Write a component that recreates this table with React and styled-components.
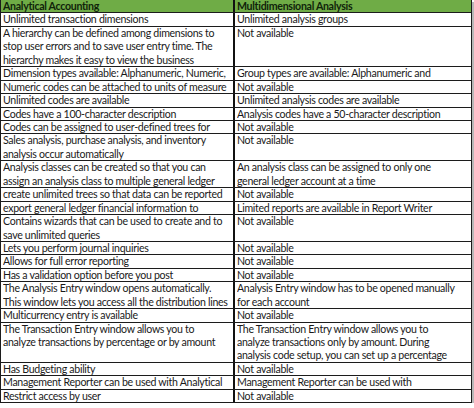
import React from 'react'
import styled, { createGlobalStyle } from 'styled-components'

const rows = [
   { lines: 1, left: ['Unlimited transaction dimensions'], right: ['Unlimited analysis groups'] },
   {
      lines: 3,
      left: ['A hierarchy can be defined among dimensions to', 'stop user errors and to save user entry time. The', 'hierarchy makes it easy to view the business'],
      right: ['Not available']
   },
   { lines: 1, left: ['Dimension types available: Alphanumeric, Numeric,'], right: ['Group types are available: Alphanumeric and'] },
   { lines: 1, left: ['Numeric codes can be attached to units of measure'], right: ['Not available'] },
   { lines: 1, left: ['Unlimited codes are available'], right: ['Unlimited analysis codes are available'] },
   { lines: 1, left: ['Codes have a 100-character description'], right: ['Analysis codes have a 50-character description'] },
   { lines: 1, left: ['Codes can be assigned to user-defined trees for'], right: ['Not available'] },
   { lines: 2, left: ['Sales analysis, purchase analysis, and inventory', 'analysis occur automatically'], right: ['Not available'] },
   {
      lines: 2,
      left: ['Analysis classes can be created so that you can', 'assign an analysis class to multiple general ledger'],
      right: ['An analysis class can be assigned to only one', 'general ledger account at a time']
   },
   { lines: 1, left: ['create unlimited trees so that data can be reported'], right: ['Not available'] },
   { lines: 1, left: ['export general ledger financial information to'], right: ['Limited reports are available in Report Writer'] },
   { lines: 2, left: ['Contains wizards that can be used to create and to', 'save unlimited queries'], right: ['Not available'] },
   { lines: 1, left: ['Lets you perform journal inquiries'], right: ['Not available'] },
   { lines: 1, left: ['Allows for full error reporting'], right: ['Not available'] },
   { lines: 1, left: ['Has a validation option before you post'], right: ['Not available'] },
   {
      lines: 2,
      left: ['The Analysis Entry window opens automatically.', 'This window lets you access all the distribution lines'],
      right: ['Analysis Entry window has to be opened manually', 'for each account']
   },
   { lines: 1, left: ['Multicurrency entry is available'], right: ['Not available'] },
   {
      lines: 3,
      left: ['The Transaction Entry window allows you to', 'analyze transactions by percentage or by amount'],
      right: ['The Transaction Entry window allows you to', 'analyze transactions only by amount. During', 'analysis code setup, you can set up a percentage']
   },
   { lines: 1, left: ['Has Budgeting ability'], right: ['Not available'] },
   { lines: 1, left: ['Management Reporter can be used with Analytical'], right: ['Management Reporter can be used with'] },
   { lines: 1, left: ['Restrict access by user'], right: ['Not available'] }
]

const LINE = 13.45

const Global = createGlobalStyle`
   body {
      margin: 0;
      background: #fff;
   }
`

const Sheet = styled.div`
   width: 472px;
   display: flex;
   flex-direction: column;
   border-left: 1px solid #1c1c1c;
   border-right: 1px solid #1c1c1c;
   box-sizing: border-box;
   box-shadow: 2px 2px 0 #b8b8b8;
   font-family: Lato, 'Open Sans', sans-serif;
   font-size: 10.6px;
   color: #1a1a1a;
`

const Row = styled.div`
   display: grid;
   grid-template-columns: 232px 1fr;
   height: ${p => p.$lines * LINE}px;
   box-sizing: border-box;
   border-bottom: 1px solid #1c1c1c;
   background: ${p => (p.$head ? '#6fac46' : '#fff')};
   font-weight: ${p => (p.$head ? 700 : 400)};
   color: ${p => (p.$head ? '#10240a' : 'inherit')};
`

const Cell = styled.div`
   overflow: hidden;
   padding: 0 1px 0 2px;
   box-sizing: border-box;
   & + & {
      border-left: 2px solid #111;
   }
`

const Line = styled.div`
   height: ${LINE}px;
   line-height: ${LINE}px;
   white-space: nowrap;
   overflow: hidden;
   letter-spacing: -0.3px;
`

const Texts = ({ lines }) => lines.map((t, i) => <Line key={i}>{t}</Line>)

export default function App() {
   return (
      <>
         <Global />
         <Sheet>
            <Row $lines={1} $head>
               <Cell>
                  <Line>Analytical Accounting</Line>
               </Cell>
               <Cell>
                  <Line>Multidimensional Analysis</Line>
               </Cell>
            </Row>
            {rows.map((r, i) => (
               <Row key={i} $lines={r.lines}>
                  <Cell>
                     <Texts lines={r.left} />
                  </Cell>
                  <Cell>
                     <Texts lines={r.right} />
                  </Cell>
               </Row>
            ))}
         </Sheet>
      </>
   )
}
